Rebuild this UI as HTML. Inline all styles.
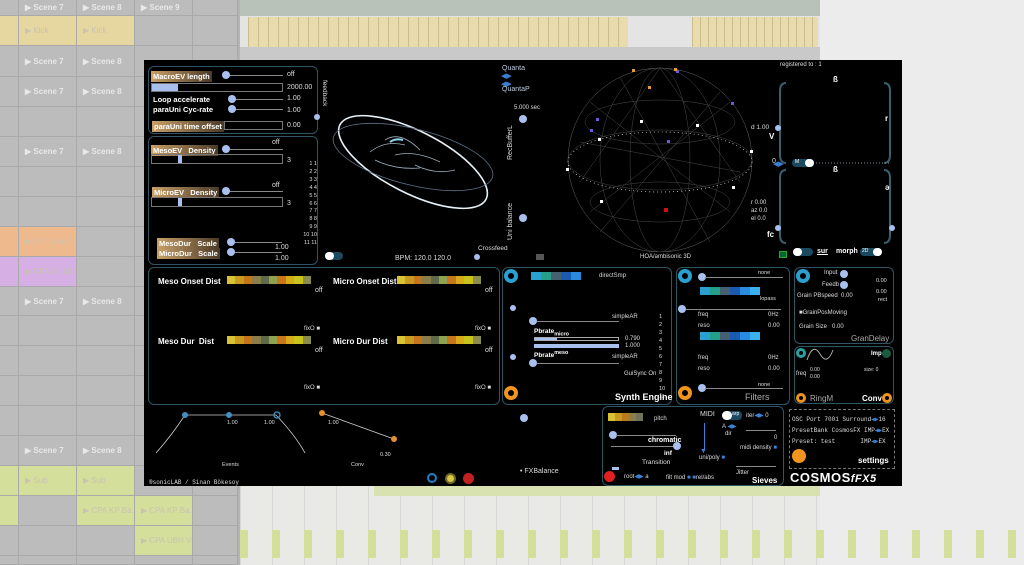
<!DOCTYPE html>
<html><head><meta charset="utf-8">
<style>
*{margin:0;padding:0;box-sizing:border-box}
body{width:1024px;height:565px;overflow:hidden;background:#e4e4e4;font-family:"Liberation Sans",sans-serif;position:relative}
.a{position:absolute}
.c{position:absolute;background:#bcbcbc;border-right:1px solid #a9a9a9;border-bottom:1px solid #a9a9a9;color:#e8e8e8;font-size:8px;font-weight:bold;padding:0 0 0 6px;display:flex;align-items:center;white-space:nowrap;overflow:hidden}
.t{position:absolute;color:#ddd;font-size:7px;white-space:nowrap}
.w{color:#fff;font-weight:bold;font-size:8px}
.box{position:absolute;border:1.5px solid #2f5563;border-radius:6px}
.sl{position:absolute;height:1px;background:#8a8a8a}
.k{position:absolute;width:8px;height:8px;border-radius:50%;background:#a9c0ee}
.lab{position:absolute;background:linear-gradient(90deg,#c9a067,#4a3a28);color:#fff;font-weight:bold;font-size:7.5px;padding:1px 2px}
.bar{position:absolute;border:1px solid #777}
.sw{position:absolute;height:8px;display:flex}
.sw i{display:block;width:10px;height:8px}
.ring{position:absolute;border-radius:50%}
</style></head><body>
<div class="a" style="left:0;top:0;width:240px;height:565px;background:#b4b4b4"></div>
<div id="grid"></div>
<script>
var rows=[[0,16,'s'],[16,46,'k'],[46,77,'s'],[77,107,'s'],[107,137,'e'],[137,167,'s'],[167,197,'e'],[197,227,'e'],[227,257,'o'],[257,287,'p'],[287,316,'s'],[316,346,'e'],[346,376,'e'],[376,406,'e'],[406,436,'e'],[436,466,'s'],[466,496,'g'],[496,526,'g2'],[526,556,'g3'],[556,565,'e']];
var cols=[[0,19],[19,77],[77,135],[135,193],[193,238]];
var h='';
rows.forEach(function(r){cols.forEach(function(c,i){
 var bg='#bcbcbc',tx='';
 if(r[2]=='s'&&(i==1))tx='▶ Scene 7';
 if(r[2]=='s'&&(i==2))tx='▶ Scene 8';
 if(r[2]=='s'&&i==3&&r[0]==0)tx='▶ Scene 9';
 if(r[2]=='k'&&i<3){bg='#e6d6a0';tx=i?'▶ Kick':'';}
 if(r[2]=='o'&&i<2){bg='#efb98e';tx=i?'▶ XY Instrum...':'';}
 if(r[2]=='p'&&i<2){bg='#d6b0e4';tx=i?'▶ CPA DL Mu...':'';}
 if(r[2]=='g'&&i<3){bg='#d4df9c';tx=i?'▶ Sub':'';}
 if(r[2]=='g2'&&i<4&&i!=1){bg='#d4df9c';tx=i?'▶ CPA KP Ba...':'';}
 if(r[2]=='g3'&&i==3){bg='#d4df9c';tx='▶ CPA UBH V...';}
 if(i==0)tx='';
 h+='<div class="c" style="left:'+c[0]+'px;top:'+r[0]+'px;width:'+(c[1]-c[0])+'px;height:'+(r[1]-r[0])+'px;background:'+bg+';'+(tx.indexOf('Scene')<0?'color:#c9c3b0;font-weight:normal':'')+'">'+tx+'</div>';
});});
document.getElementById('grid').innerHTML=h;
</script>
<div class="a" style="left:240px;top:0;width:580px;height:16px;background:#b9c2b9"></div>
<div class="a" style="left:248px;top:17px;width:380px;height:30px;background:#e8dcae;background-image:repeating-linear-gradient(90deg,#cbbd8a 0 1px,transparent 1px 10px)"></div>
<div class="a" style="left:692px;top:17px;width:126px;height:30px;background:#e8dcae;background-image:repeating-linear-gradient(90deg,#cbbd8a 0 1px,transparent 1px 8px)"></div>
<div class="a" style="left:240px;top:47px;width:580px;height:13px;background:#c9c9c9"></div>
<div class="a" style="left:820px;top:0;width:204px;height:565px;background:#ececec"></div>
<div class="a" style="left:240px;top:486px;width:580px;height:79px;background:#e9eae6;background-image:repeating-linear-gradient(90deg,#d8d8d8 0 1px,transparent 1px 32px)"></div>
<div class="a" style="left:374px;top:486px;width:230px;height:10px;background:#d8e2b0"></div>
<div class="a" style="left:604px;top:486px;width:216px;height:10px;background:#d8e2b0"></div>
<div class="a" style="left:240px;top:530px;width:780px;height:28px;background-image:repeating-linear-gradient(90deg,#d4df9c 0 8px,transparent 8px 32px)"></div>

<div class="a" style="left:144px;top:60px;width:758px;height:426px;background:#000"></div>

<div class="box" style="left:148px;top:66px;width:170px;height:68px"></div>
<div class="lab" style="left:151px;top:71px">MacroEV length</div>
<div class="sl" style="left:225px;top:75px;width:58px"></div><div class="k" style="left:222px;top:71px"></div>
<div class="t" style="left:287px;top:71px">off</div>
<div class="bar" style="left:151px;top:83px;width:132px;height:9px"><div style="width:26px;height:7px;background:#a9c0ee"></div></div>
<div class="t" style="left:287px;top:84px">2000.00</div>
<div class="t w" style="left:153px;top:95px;font-size:7.5px">Loop accelerate</div>
<div class="sl" style="left:230px;top:99px;width:53px"></div><div class="k" style="left:228px;top:95px"></div>
<div class="t" style="left:287px;top:95px">1.00</div>
<div class="t w" style="left:153px;top:105px;font-size:7.5px">paraUni Cyc-rate</div>
<div class="sl" style="left:230px;top:109px;width:53px"></div><div class="k" style="left:228px;top:105px"></div>
<div class="t" style="left:287px;top:107px">1.00</div>
<div class="lab" style="left:152px;top:121px">paraUni time offset</div>
<div class="bar" style="left:224px;top:121px;width:59px;height:9px"></div>
<div class="t" style="left:287px;top:122px">0.00</div>
<div class="t" style="top:80px;transform:rotate(90deg);transform-origin:left top;font-size:6.5px;left:328px">feedback</div>
<div class="k" style="left:314px;top:114px;width:6px;height:6px"></div>

<div class="box" style="left:148px;top:136px;width:170px;height:129px"></div>
<div class="lab" style="left:151px;top:145px">MesoEV&nbsp;&nbsp;&nbsp;Density</div>
<div class="sl" style="left:226px;top:149px;width:57px"></div><div class="k" style="left:222px;top:145px"></div>
<div class="t" style="left:272px;top:139px">off</div>
<div class="bar" style="left:151px;top:154px;width:132px;height:10px"><div style="margin-left:26px;width:4px;height:8px;background:#a9c0ee"></div></div>
<div class="t" style="left:287px;top:157px">3</div>
<div class="lab" style="left:152px;top:187px">MicroEV&nbsp;&nbsp;&nbsp;Density</div>
<div class="sl" style="left:226px;top:191px;width:57px"></div><div class="k" style="left:222px;top:187px"></div>
<div class="t" style="left:272px;top:182px">off</div>
<div class="bar" style="left:151px;top:197px;width:132px;height:10px"><div style="margin-left:26px;width:4px;height:8px;background:#a9c0ee"></div></div>
<div class="t" style="left:287px;top:200px">3</div>
<div class="t" style="left:301px;top:161px;font-size:5.5px;line-height:7.9px;text-align:right;width:16px">1 1<br>2 2<br>3 3<br>4 4<br>5 5<br>6 6<br>7 7<br>8 8<br>9 9<br>10 10<br>11 11</div>
<div class="lab" style="left:157px;top:238px">MesoDur&nbsp;&nbsp;&nbsp;Scale</div>
<div class="lab" style="left:157px;top:248px">MicroDur&nbsp;&nbsp;&nbsp;Scale</div>
<div class="sl" style="left:232px;top:242px;width:50px"></div><div class="k" style="left:227px;top:238px"></div>
<div class="sl" style="left:232px;top:252px;width:50px"></div><div class="k" style="left:227px;top:248px"></div>
<div class="t" style="left:275px;top:244px">1.00</div>
<div class="t" style="left:275px;top:255px">1.00</div>

<svg class="a" style="left:325px;top:100px" width="180" height="120">
<ellipse cx="88" cy="62" rx="82" ry="31" transform="rotate(27 88 62)" fill="none" stroke="#e6f0f6" stroke-width="1.6"/>
<ellipse cx="88" cy="57" rx="82" ry="28" transform="rotate(14 88 57)" fill="none" stroke="#5f7288" stroke-width="0.8"/>
<path d="M45 52 Q60 40 80 45 M50 60 Q70 70 95 68 M60 40 Q75 30 95 50 M90 65 Q110 75 130 70 M70 55 Q90 50 115 62" fill="none" stroke="#9fb0bf" stroke-width="0.8"/>
<path d="M65 42 Q70 38 78 40" stroke="#8fd7ef" stroke-width="2" fill="none"/>
</svg>
<div class="a" style="left:325px;top:252px;width:18px;height:8px;border-radius:4px;background:#1b4a60"></div>
<div class="a" style="left:325px;top:252px;width:9px;height:8px;border-radius:4px;background:#fff"></div>
<div class="t" style="left:395px;top:255px;font-size:7px">BPM: 120.0 120.0</div>
<div class="t" style="left:478px;top:245px;font-size:6.5px">Crossfeed</div>
<div class="k" style="left:474px;top:254px;width:6px;height:6px"></div>
<div class="a" style="left:536px;top:254px;width:8px;height:6px;background:#555"></div>

<div class="t" style="left:502px;top:65px;color:#bcd">Quanta</div>
<div class="a" style="left:501px;top:73px;color:#3a82d8;font-size:7px;line-height:8px">◀▶<br>◀▶</div>
<div class="t" style="left:502px;top:86px;color:#bcd">QuantaP</div>
<div class="t" style="left:514px;top:105px;font-size:6px">5.000 sec</div>
<div class="k" style="left:519px;top:115px"></div>
<div class="t" style="left:507px;top:160px;transform:rotate(-90deg);transform-origin:left top;font-size:7px">RecBufferL</div>
<div class="t" style="left:507px;top:240px;transform:rotate(-90deg);transform-origin:left top;font-size:7px">Uni balance</div>
<div class="k" style="left:519px;top:214px"></div>

<svg class="a" style="left:560px;top:62px" width="200" height="190">
<g fill="none" stroke="#4a4a4a" stroke-width="0.5">
<circle cx="100" cy="98" r="92" stroke="#666"/>
<ellipse cx="100" cy="98" rx="92" ry="30"/><ellipse cx="100" cy="60" rx="75" ry="22"/><ellipse cx="100" cy="140" rx="70" ry="20"/>
<ellipse cx="100" cy="98" rx="30" ry="92"/><ellipse cx="100" cy="98" rx="60" ry="92"/>
<path d="M30 40 L170 150 M170 40 L30 150 M100 6 L20 120 M100 6 L180 120 M40 170 L160 30 M20 80 L180 110 M60 15 L150 180"/>
</g>
<ellipse cx="100" cy="100" rx="92" ry="30" fill="none" stroke="#ccc" stroke-width="0.8" stroke-dasharray="1 3"/>
<g fill="#fff"><rect x="6" y="106" width="3" height="3"/><rect x="80" y="58" width="3" height="3"/><rect x="136" y="62" width="3" height="3"/><rect x="190" y="88" width="3" height="3"/><rect x="38" y="76" width="3" height="3"/><rect x="40" y="138" width="3" height="3"/><rect x="172" y="124" width="3" height="3"/></g>
<g fill="#6a5ad8"><rect x="36" y="56" width="3" height="3"/><rect x="116" y="8" width="3" height="3"/><rect x="171" y="40" width="3" height="3"/><rect x="30" y="67" width="3" height="3"/><rect x="107" y="78" width="3" height="3"/></g>
<g fill="#e39a3a"><rect x="72" y="7" width="3" height="3"/><rect x="114" y="6" width="3" height="3"/><rect x="88" y="24" width="3" height="3"/></g>
<rect x="104" y="146" width="4" height="4" fill="#d01010"/>
</svg>
<div class="t" style="left:640px;top:254px;font-size:6px">HOA/ambisonic 3D</div>
<div class="t" style="left:780px;top:62px;font-size:6px">registered to : 1</div>
<div class="t" style="left:751px;top:124px;font-size:6.5px">d 1.00</div>
<div class="t" style="left:751px;top:199px;font-size:6px;line-height:8px">r 0.00<br>az 0.0<br>el 0.0</div>

<svg class="a" style="left:770px;top:75px" width="130" height="185">
<g fill="none" stroke="#3a6070" stroke-width="2">
<path d="M16 8 Q10 8 10 16 V80 Q10 88 16 88"/><path d="M114 8 Q120 8 120 16 V80 Q120 88 114 88"/>
<path d="M16 95 Q10 95 10 103 V160 Q10 168 16 168"/><path d="M114 95 Q120 95 120 103 V160 Q120 168 114 168"/>
</g>
<line x1="40" y1="88" x2="120" y2="88" stroke="#889" stroke-dasharray="1 2"/>
</svg>
<div class="t w" style="left:833px;top:75px">ß</div>
<div class="t w" style="left:885px;top:114px">r</div>
<div class="t w" style="left:769px;top:132px">V</div>
<div class="t" style="left:772px;top:158px">0</div>
<div class="a" style="left:773px;top:160px;color:#3a82d8;font-size:7px">◀▶</div>
<div class="a" style="left:792px;top:159px;width:22px;height:8px;border-radius:4px;background:#1b4a60;font-size:5px;color:#fff;padding-left:3px">M</div>
<div class="a" style="left:805px;top:159px;width:9px;height:8px;border-radius:4px;background:#fff"></div>
<div class="t w" style="left:833px;top:165px">ß</div>
<div class="t w" style="left:885px;top:183px">ə</div>
<div class="t w" style="left:767px;top:230px">fc</div>
<div class="k" style="left:775px;top:125px;width:6px;height:6px"></div>
<div class="k" style="left:775px;top:225px;width:6px;height:6px"></div>
<div class="k" style="left:889px;top:225px;width:6px;height:6px"></div>
<div class="a" style="left:779px;top:251px;width:8px;height:7px;border:1px solid #2a2;background:#063"></div>
<div class="a" style="left:793px;top:248px;width:20px;height:8px;border-radius:4px;background:#1b4a60"></div>
<div class="a" style="left:793px;top:248px;width:9px;height:8px;border-radius:4px;background:#fff"></div>
<div class="t w" style="left:817px;top:248px;font-size:7px;text-decoration:underline">sur</div>
<div class="t w" style="left:836px;top:248px;font-size:7px">morph</div>
<div class="a" style="left:860px;top:248px;width:22px;height:8px;border-radius:4px;background:#1b4a60;font-size:5px;color:#fff;padding-left:2px">2D</div>
<div class="a" style="left:873px;top:248px;width:9px;height:8px;border-radius:4px;background:#fff"></div>

<div class="box" style="left:148px;top:267px;width:352px;height:138px"></div>
<div class="t w" style="left:158px;top:277px">Meso Onset Dist</div>
<div class="t w" style="left:333px;top:277px">Micro Onset Dist</div>
<div class="t w" style="left:158px;top:337px">Meso Dur&nbsp; Dist</div>
<div class="t w" style="left:333px;top:337px">Micro Dur Dist</div>
<div id="sws"></div>
<script>
var cs=['#d9c236','#c99a1f','#c5761d','#8b7e4a','#5f6a4a','#8ca24e','#c7761d','#d6aa1a','#c8c41c','#8c8c4e'];
var pos=[[227,276],[397,276],[227,336],[397,336]],s='';
pos.forEach(function(p){s+='<div class="sw" style="left:'+p[0]+'px;top:'+p[1]+'px">';cs.forEach(function(c){s+='<i style="width:8.4px;background:'+c+'"></i>'});s+='</div>';});
document.getElementById('sws').innerHTML=s;
</script>
<div class="t" style="left:315px;top:287px">off</div><div class="t" style="left:485px;top:287px">off</div>
<div class="t" style="left:315px;top:347px">off</div><div class="t" style="left:485px;top:347px">off</div>
<div class="t" style="left:304px;top:326px;font-size:6px">fixO ■</div><div class="t" style="left:475px;top:326px;font-size:6px">fixO ■</div>
<div class="t" style="left:304px;top:385px;font-size:6px">fixO ■</div><div class="t" style="left:475px;top:385px;font-size:6px">fixO ■</div>

<svg class="a" style="left:150px;top:405px" width="260" height="70">
<path d="M6 48 Q22 30 35 10 L126 10 Q145 30 155 48" fill="none" stroke="#ccc" stroke-width="0.8"/>
<circle cx="35" cy="10" r="3" fill="#3d92c2"/><circle cx="79" cy="10" r="3" fill="#3d92c2"/><circle cx="127" cy="10" r="3" fill="none" stroke="#3d92c2" stroke-width="1.3"/>
<path d="M172 8 L244 34" stroke="#ccc" stroke-width="0.8"/>
<circle cx="172" cy="8" r="3" fill="#e6902b"/><circle cx="244" cy="34" r="3" fill="#e6902b"/>
</svg>
<div class="t" style="left:227px;top:420px;font-size:5.5px">1.00</div>
<div class="t" style="left:264px;top:420px;font-size:5.5px">1.00</div>
<div class="t" style="left:328px;top:420px;font-size:5.5px">1.00</div>
<div class="t" style="left:380px;top:452px;font-size:5.5px">0.30</div>
<div class="t" style="left:222px;top:462px;font-size:5.5px">Events</div>
<div class="t" style="left:351px;top:462px;font-size:5.5px">Conv</div>
<div class="t" style="left:149px;top:479px;font-family:'Liberation Mono',monospace;font-size:6px">®sonicLAB / Sinan Bökesoy</div>
<div class="ring" style="left:427px;top:473px;width:10px;height:10px;border:2px solid #1d7fc8"></div>
<div class="ring" style="left:445px;top:473px;width:11px;height:11px;background:#d8c640;border:2px solid #6a6a2a"></div>
<div class="ring" style="left:463px;top:473px;width:11px;height:11px;background:#c42020"></div>

<div class="box" style="left:502px;top:267px;width:170px;height:138px"></div>
<div class="ring" style="left:504px;top:269px;width:14px;height:14px;border:4px solid #2aa0d0"></div>
<div class="ring" style="left:504px;top:386px;width:14px;height:14px;border:4px solid #f0941e"></div>
<div class="sw" style="left:531px;top:272px"><i style="background:#2aa0d0"></i><i style="background:#24a08a"></i><i style="background:#466070"></i><i style="background:#1a5ab0"></i><i style="background:#2a8ae0"></i></div>
<div class="t" style="left:599px;top:273px;font-size:6px">directSmp</div>
<div class="t" style="left:612px;top:314px;font-size:6px">simpleAR</div>
<div class="sl" style="left:535px;top:321px;width:84px"></div><div class="k" style="left:529px;top:317px"></div>
<div class="t w" style="left:534px;top:328px;font-size:6.5px">Pbrate<sub>micro</sub></div>
<div class="a" style="left:534px;top:337px;width:85px;height:4px;border:1px solid #aaa"><div style="width:22px;height:2px;background:#a9c0ee"></div></div>
<div class="a" style="left:534px;top:344px;width:85px;height:4px;background:#a9c0ee"></div>
<div class="t" style="left:625px;top:336px;font-size:6px">0.790</div>
<div class="t" style="left:625px;top:343px;font-size:6px">1.000</div>
<div class="t w" style="left:534px;top:350px;font-size:6.5px">Pbrate<sup>meso</sup></div>
<div class="t" style="left:612px;top:354px;font-size:6px">simpleAR</div>
<div class="sl" style="left:535px;top:363px;width:84px"></div><div class="k" style="left:529px;top:359px"></div>
<div class="t" style="left:624px;top:371px;font-size:6px">GuiSync On</div>
<div class="t" style="left:659px;top:313px;font-size:5.5px;line-height:8px">1<br>2<br>3<br>4<br>5<br>6<br>7<br>8<br>9<br>10<br>11</div>
<div class="t w" style="left:615px;top:392px;font-size:9px">Synth Engine</div>
<div class="k" style="left:510px;top:305px;width:6px;height:6px"></div>
<div class="k" style="left:510px;top:354px;width:6px;height:6px"></div>

<div class="box" style="left:676px;top:267px;width:114px;height:138px"></div>
<div class="ring" style="left:678px;top:269px;width:14px;height:14px;border:4px solid #2aa0d0"></div>
<div class="ring" style="left:678px;top:386px;width:14px;height:14px;border:4px solid #f0941e"></div>
<div class="k" style="left:698px;top:273px"></div><div class="sl" style="left:705px;top:277px;width:78px"></div>
<div class="t" style="left:758px;top:270px;font-size:5.5px">none</div>
<div class="sw" style="left:700px;top:287px"><i style="background:#2aa0d0"></i><i style="background:#24a08a"></i><i style="background:#466070"></i><i style="background:#1a5ab0"></i><i style="background:#2a8ae0"></i><i style="background:#39b0f0"></i></div>
<div class="t" style="left:760px;top:296px;font-size:5.5px">lopass</div>
<div class="k" style="left:678px;top:305px"></div><div class="sl" style="left:686px;top:309px;width:95px"></div>
<div class="t" style="left:698px;top:312px;font-size:6px">freq</div><div class="t" style="left:768px;top:312px;font-size:6px">0Hz</div>
<div class="t" style="left:698px;top:323px;font-size:6px">reso</div><div class="t" style="left:768px;top:323px;font-size:6px">0.00</div>
<div class="sw" style="left:700px;top:332px"><i style="background:#2aa0d0"></i><i style="background:#24a08a"></i><i style="background:#466070"></i><i style="background:#1a5ab0"></i><i style="background:#2a8ae0"></i><i style="background:#39b0f0"></i></div>
<div class="t" style="left:698px;top:355px;font-size:6px">freq</div><div class="t" style="left:768px;top:355px;font-size:6px">0Hz</div>
<div class="t" style="left:698px;top:366px;font-size:6px">reso</div><div class="t" style="left:768px;top:366px;font-size:6px">0.00</div>
<div class="k" style="left:698px;top:384px"></div><div class="sl" style="left:705px;top:388px;width:78px"></div>
<div class="t" style="left:758px;top:382px;font-size:5.5px">none</div>
<div class="t" style="left:745px;top:392px;font-size:9px;color:#aaa">Filters</div>

<div class="box" style="left:794px;top:267px;width:100px;height:77px"></div>
<div class="ring" style="left:796px;top:269px;width:14px;height:14px;border:4px solid #2aa0d0"></div>
<div class="t" style="left:824px;top:270px;font-size:6px">Input</div><div class="k" style="left:840px;top:270px"></div>
<div class="t" style="left:822px;top:282px;font-size:6px">Feedb</div><div class="k" style="left:840px;top:281px"></div>
<div class="t" style="left:876px;top:278px;font-size:5.5px">0.00</div><div class="t" style="left:876px;top:289px;font-size:5.5px">0.00</div>
<div class="t" style="left:797px;top:293px;font-size:6px">Grain PBspeed &nbsp;0.00</div>
<div class="t" style="left:878px;top:297px;font-size:5.5px">rect</div>
<div class="t" style="left:799px;top:310px;font-size:6px">■GrainPosMoving</div>
<div class="t" style="left:799px;top:324px;font-size:6px">Grain Size &nbsp;&nbsp;0.00</div>
<div class="t" style="left:851px;top:334px;font-size:8px;color:#aaa">GranDelay</div>
<div class="box" style="left:794px;top:346px;width:100px;height:58px"></div>
<div class="ring" style="left:796px;top:348px;width:10px;height:10px;border:3px solid #2aa0a0"></div>
<svg class="a" style="left:806px;top:348px" width="28" height="14"><path d="M1 12 Q7 -6 14 6 T27 2" fill="none" stroke="#aaa"/></svg>
<div class="t" style="left:796px;top:371px;font-size:6px">freq</div>
<div class="t" style="left:810px;top:367px;font-size:5px;line-height:7px">0.00<br>0.00</div>
<div class="ring" style="left:796px;top:393px;width:10px;height:10px;border:3px solid #f0941e"></div>
<div class="t" style="left:810px;top:394px;font-size:8px;color:#aaa">RingM</div>
<div class="t w" style="left:871px;top:351px;font-size:6px">Imp</div>
<div class="ring" style="left:882px;top:349px;width:9px;height:9px;background:#1b5a40"></div>
<div class="t" style="left:864px;top:367px;font-size:5px">size: 0</div>
<div class="t w" style="left:862px;top:394px;font-size:8px">Conv</div>
<div class="ring" style="left:882px;top:393px;width:10px;height:10px;border:3px solid #f0941e"></div>

<div class="k" style="left:520px;top:414px"></div>
<div class="t" style="left:520px;top:468px;font-size:7px">• FXBalance</div>

<div class="box" style="left:602px;top:406px;width:182px;height:80px"></div>
<div class="sw" style="left:608px;top:413px"><i style="width:7px;background:#d9c236"></i><i style="width:7px;background:#c99a1f"></i><i style="width:7px;background:#b87c1d"></i><i style="width:7px;background:#8b7e4a"></i><i style="width:7px;background:#6e745a"></i></div>
<div class="t" style="left:654px;top:416px;font-size:6px">pitch</div>
<div class="k" style="left:609px;top:431px"></div><div class="sl" style="left:616px;top:435px;width:60px"></div>
<div class="t w" style="left:648px;top:437px;font-size:7px">chromatic</div>
<div class="sl" style="left:611px;top:446px;width:65px"></div><div class="k" style="left:673px;top:442px"></div>
<div class="t w" style="left:664px;top:450px;font-size:6.5px">inf</div>
<div class="t" style="left:642px;top:459px;font-size:6.5px">Transition</div>
<div class="a" style="left:612px;top:467px;width:7px;height:3px;background:#a9c0ee"></div>
<div class="ring" style="left:604px;top:471px;width:11px;height:11px;background:#e02020"></div>
<div class="t" style="left:624px;top:473px;font-size:6px">root<span style="color:#3a82d8">◀▶</span> a</div>
<div class="t" style="left:666px;top:475px;font-size:6px">filt mod <span style="color:#3a82d8">■ ■</span>rel/abs</div>
<div class="t" style="left:700px;top:411px;font-size:7px">MIDI</div>
<div class="a" style="left:722px;top:411px;width:20px;height:9px;border-radius:4px;background:#1b4a60;font-size:5px;color:#fff;padding-left:10px">arp</div>
<div class="a" style="left:722px;top:411px;width:10px;height:9px;border-radius:5px;background:#fff"></div>
<div class="t" style="left:746px;top:412px;font-size:6px">iter<span style="color:#3a82d8">◀▶</span> 0</div>
<div class="a" style="left:704px;top:423px;width:1px;height:27px;background:#3a82d8"></div>
<div class="t" style="left:700px;top:448px;color:#3a82d8;font-size:7px">▼</div>
<div class="t" style="left:722px;top:423px;font-size:6px">A <span style="color:#3a82d8">◀▶</span></div>
<div class="t" style="left:725px;top:431px;font-size:6px">dir</div>
<div class="sl" style="left:746px;top:430px;width:30px"></div>
<div class="t" style="left:774px;top:435px;font-size:6px">0</div>
<div class="t" style="left:740px;top:445px;font-size:6px">midi density <span style="color:#3a82d8">■</span></div>
<div class="t" style="left:699px;top:455px;font-size:6px">uni/poly <span style="color:#3a82d8">■</span></div>
<div class="sl" style="left:736px;top:466px;width:40px"></div>
<div class="t" style="left:736px;top:470px;font-size:6px">Jitter</div>
<div class="t w" style="left:752px;top:476px;font-size:8px">Sieves</div>

<div class="a" style="left:789px;top:409px;width:106px;height:60px;border:1px dashed #777"></div>
<div class="t" style="left:792px;top:414px;font-family:'Liberation Mono',monospace;font-size:6px;line-height:11px;color:#ddd">OSC Port 7001 Surround<span style="color:#3a82d8">◀▶</span>16<br>PresetBank CosmosFX IMP<span style="color:#3a82d8">◀▶</span>EX<br>Preset: test &nbsp;&nbsp;&nbsp;&nbsp;&nbsp;&nbsp;IMP<span style="color:#3a82d8">◀▶</span>EX</div>
<div class="ring" style="left:792px;top:449px;width:14px;height:14px;background:#f0941e"></div>
<div class="t w" style="left:858px;top:456px;font-size:8px">settings</div>
<div class="t w" style="left:790px;top:470px;font-size:13px;letter-spacing:0.5px">COSMOS<i style="font-size:11px">fFX5</i></div>
</body></html>
